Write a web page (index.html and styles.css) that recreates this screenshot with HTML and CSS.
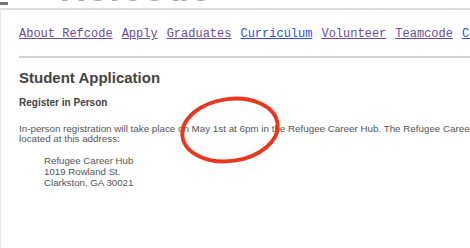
FILE: index.html
```html
<!DOCTYPE html>
<html lang="en">
<head>
<meta charset="utf-8">
<title>Student Application</title>
<link rel="stylesheet" href="styles.css">
</head>
<body>
<div class="page">
  <header class="site-header">
    <span class="logo-mark"></span>
    <span class="site-title">Refcode</span>
  </header>
  <div class="content">
    <nav class="nav">
      <a class="visited" href="#">About Refcode</a>
      <a class="visited" href="#">Apply</a>
      <a class="visited" href="#">Graduates</a>
      <a href="#">Curriculum</a>
      <a class="visited" href="#">Volunteer</a>
      <a class="visited" href="#">Teamcode</a>
      <a href="#">Contact</a>
    </nav>
    <hr class="rule">
    <h1 class="heading">Student Application</h1>
    <h2 class="subheading">Register in Person</h2>
    <p class="para">In-person registration will take place on May 1st at 6pm in the Refugee Career Hub. The Refugee Career Hub is located at this address:</p>
    <div class="address">
      <div>Refugee Career Hub</div>
      <div>1019 Rowland St.</div>
      <div>Clarkston, GA 30021</div>
    </div>
    <svg class="annotation" width="112" height="76" viewBox="0 0 112 76" aria-hidden="true">
      <ellipse cx="56" cy="38" rx="48" ry="31" transform="rotate(-8 56 38)" fill="none" stroke="#e8371f" stroke-width="3.8"/>
      <path d="M11 31 C 18 13, 44 6, 62 7" fill="none" stroke="#e8371f" stroke-width="1.3" opacity="0.7"/>
    </svg>
  </div>
</div>
</body>
</html>
```

FILE: styles.css
```css
html, body {
  margin: 0;
  padding: 0;
  overflow: hidden;
  background: #fff;
}

.page {
  position: relative;
  width: 560px;
  height: 248px;
  font-family: "Liberation Sans", Arial, sans-serif;
  color: #555;
}

.site-header {
  height: 8px;
  overflow: hidden;
  display: flex;
  align-items: flex-end;
  border-bottom: 2px solid #dedede;
}

.logo-mark {
  width: 8px;
  height: 3px;
  margin-bottom: 3px;
  background: #777;
  flex: none;
}

.site-title {
  margin-left: 52px;
  margin-bottom: 2px;
  font-size: 35px;
  line-height: 35px;
  font-weight: bold;
  color: #aaa;
  letter-spacing: 2px;
}

.content {
  position: relative;
  border-left: 1px solid #e6e6e6;
  padding-left: 18px;
  height: 238px;
}

.nav {
  display: flex;
  gap: 9px;
  white-space: nowrap;
  padding-top: 17px;
  font-family: "Liberation Mono", "Courier New", monospace;
  font-size: 12px;
  line-height: 14px;
}

.nav a {
  color: #2f52e6;
  text-decoration: underline;
}

.nav a.visited {
  color: #6a4b9e;
}

.rule {
  margin: 15px 0 0 0;
  border: 0;
  border-top: 2px solid #d4d4d4;
  width: 540px;
}

.heading {
  margin: 11px 0 0 0;
  font-size: 15px;
  line-height: 18px;
  font-weight: bold;
  color: #444;
}

.subheading {
  margin: 10px 0 0 0;
  font-size: 10px;
  line-height: 12px;
  font-weight: bold;
  color: #444;
}

.para {
  margin: 14.5px 0 0 0;
  width: 505px;
  font-size: 9.8px;
  line-height: 10.5px;
}

.address {
  margin-top: 10.5px;
  padding-left: 25px;
  font-size: 9.7px;
  line-height: 11.2px;
}

.annotation {
  position: absolute;
  left: 173px;
  top: 82px;
}
```
